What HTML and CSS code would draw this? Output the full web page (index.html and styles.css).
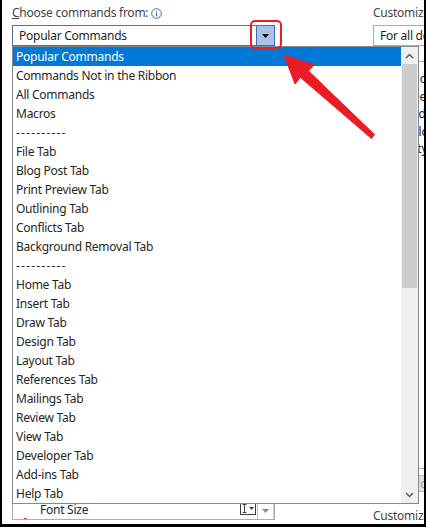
FILE: index.html
```html
<!DOCTYPE html>
<html lang="en">

<head>
  <meta charset="UTF-8">
  <meta name="viewport" content="width=device-width, initial-scale=1.0">
  <title>Word Options | Customize Ribbon</title>
  <link rel="stylesheet" href="styles.css">
</head>

<body>
  <main class="dialog">
    <section class="pane pane-left">
      <label class="caption"><u>C</u>hoose commands from:<svg class="info" width="11" height="11" viewBox="0 0 11 11"><circle cx="5.5" cy="5.5" r="4.8" fill="none" stroke="#3d6db0" stroke-width="1"/><rect x="5" y="2.6" width="1" height="1" fill="#3d6db0"/><rect x="5" y="4.4" width="1" height="4" fill="#3d6db0"/></svg></label>
      <div class="combo combo-focus">
        <span class="combo-text">Popular Commands</span>
        <span class="combo-btn"><svg width="7" height="4" viewBox="0 0 7 4"><path d="M0 0h7L3.5 4z" fill="#000"/></svg></span>
      </div>
      <ul class="cmd-list">
        <li class="cmd-font-size">
          <span class="cmd-icon"></span>
          <span class="cmd-name">Font Size</span>
          <svg class="ibeam" width="16" height="13" viewBox="0 0 16 13"><rect x="0.5" y="0.5" width="15" height="12" fill="#fff" stroke="#404040"/><path d="M2.5 2.5h4M4.5 2.5v8M2.5 10.5h4" stroke="#404040" fill="none"/><path d="M9 5h5L11.5 8z" fill="#404040"/></svg>
          <span class="cmd-drop"><svg width="7" height="4" viewBox="0 0 7 4"><path d="M0 0h7L3.5 4z" fill="#8a8a8a"/></svg></span>
        </li>
      </ul>
    </section>

    <section class="pane pane-right">
      <label class="caption">Customize the Ribbon:</label>
      <div class="combo">
        <span class="combo-text">For all documents (Default)</span>
      </div>
      <ul class="tab-tree">
        <li>Home</li>
        <li>Developer</li>
        <li>Add-ins</li>
        <li>Blog Post</li>
        <li>Styles</li>
      </ul>
      <button class="btn" disabled>Modify</button>
      <label class="caption">Customizations:</label>
    </section>

    <!-- open list of the "Choose commands from" combo -->
    <div class="dropdown">
      <ul class="dropdown-items">
        <li class="selected">Popular Commands</li>
        <li>Commands Not in the Ribbon</li>
        <li>All Commands</li>
        <li>Macros</li>
        <li class="sep">----------</li>
        <li>File Tab</li>
        <li>Blog Post Tab</li>
        <li>Print Preview Tab</li>
        <li>Outlining Tab</li>
        <li>Conflicts Tab</li>
        <li>Background Removal Tab</li>
        <li class="sep">----------</li>
        <li>Home Tab</li>
        <li>Insert Tab</li>
        <li>Draw Tab</li>
        <li>Design Tab</li>
        <li>Layout Tab</li>
        <li>References Tab</li>
        <li>Mailings Tab</li>
        <li>Review Tab</li>
        <li>View Tab</li>
        <li>Developer Tab</li>
        <li>Add-ins Tab</li>
        <li>Help Tab</li>
      </ul>
      <div class="scrollbar">
        <span class="scroll-arrow"><svg width="9" height="6" viewBox="0 0 9 6"><path d="M1 5l3.5-3.5L8 5" fill="none" stroke="#606060" stroke-width="1.5"/></svg></span>
        <span class="scroll-track"><span class="scroll-thumb"></span></span>
        <span class="scroll-arrow"><svg width="9" height="6" viewBox="0 0 9 6"><path d="M1 1l3.5 3.5L8 1" fill="none" stroke="#606060" stroke-width="1.5"/></svg></span>
      </div>
    </div>
  </main>

  <!-- red callout: box round the drop button and the arrow pointing at it -->
  <svg class="callout" width="426" height="527" viewBox="0 0 426 527">
    <rect x="251" y="21" width="30" height="27" rx="4" fill="none" stroke="#ec1c24" stroke-width="2"/>
    <polygon points="284,55 314,65 308.5,71 374.5,134.5 371.5,138.5 300.5,77.5 295,84" fill="#ec1c24" stroke="#ec1c24" stroke-width="1" stroke-linejoin="round"/>
  </svg>
</body>

</html>
```

FILE: styles.css
```css
/* ---- General ---- */

:root {
  --text: #262626;
  --caption: #444;
  --select: #0078d7;
  --edge: #adadad;
}

* {
  box-sizing: border-box;
}

body {
  position: relative;
  width: 426px;
  height: 527px;
  margin: 0;
  overflow: hidden;
  background: #fff;
  font-family: "Noto Sans", "Open Sans", sans-serif;
  font-size: 12px;
  letter-spacing: -0.25px;
  color: var(--text);
}

ul {
  margin: 0;
  padding: 0;
  list-style: none;
}

.dialog {
  position: relative;
  display: flex;
  height: 527px;
  padding: 5px 0 0 10px;
  border-left: 2px solid #000;
  border-right: 2px solid #000;
  border-bottom: 3px solid #000;
  overflow: hidden;
}

.pane {
  display: flex;
  flex-direction: column;
  flex-shrink: 0;
}

.pane-left {
  width: 263px;
  margin-right: 98px;
}

.pane-right {
  width: 240px;
}

.caption {
  display: flex;
  align-items: center;
  height: 16px;
  line-height: 16px;
  color: var(--caption);
  white-space: nowrap;
}

.info {
  margin-left: 3px;
}

/* ---- Combo boxes ---- */

.combo {
  display: flex;
  height: 21px;
  margin-top: 4px;
  border: 1px solid var(--edge);
  background: #fff;
}

.combo-text {
  flex: 1;
  padding-left: 6px;
  line-height: 19px;
  color: #1e1e1e;
  white-space: nowrap;
}

.combo-focus {
  border-color: #56709e;
}

.combo-btn {
  display: flex;
  align-items: center;
  justify-content: center;
  width: 19px;
  margin: -1px -1px -1px 0;
  border: 1px solid #3f6fb4;
  background: #a9c2e6;
}

/* ---- Command list under the popup ---- */

.cmd-list {
  display: flex;
  flex: 1;
  flex-direction: column;
  justify-content: flex-end;
  margin: 6px 0 4px;
  padding-bottom: 1px;
  border: 1px solid var(--edge);
  overflow: hidden;
}

.cmd-list li {
  flex-shrink: 0;
  height: 16px;
  padding-left: 27px;
  line-height: 16px;
  white-space: nowrap;
}

.cmd-font-size {
  position: relative;
  display: flex;
  align-items: center;
}

.cmd-icon {
  position: absolute;
  left: 11px;
  bottom: -2px;
  width: 3px;
  height: 2px;
  background: #d83b2b;
}

.cmd-name {
  flex: 1;
}

.ibeam {
  margin-top: -3px;
}

.cmd-drop {
  display: flex;
  align-items: center;
  justify-content: center;
  width: 17px;
  height: 17px;
  margin: 0 0 -2px 1px;
  border: 1px solid #c4c4c4;
}

/* ---- Right pane ---- */

.tab-tree {
  flex: 1;
  margin-top: 15px;
  padding: 8px 0 0 37px;
  border: 1px solid var(--edge);
}

.tab-tree li {
  height: 17.5px;
  line-height: 17.5px;
  white-space: nowrap;
}

.btn {
  height: 17px;
  margin: 6px 0 16px;
  padding: 0 0 0 35px;
  width: 120px;
  border: 1px solid #bfbfbf;
  background: #e1e1e1;
  font: inherit;
  line-height: 15px;
  color: #a0a0a0;
  text-align: left;
}

/* ---- Popup list ---- */

.dropdown {
  position: absolute;
  top: 46px;
  left: 10px;
  display: flex;
  width: 407px;
  height: 458px;
  border: 1px solid #828790;
  background: #fff;
}

.dropdown-items {
  flex: 1;
}

.dropdown-items li {
  height: 19px;
  padding-left: 3px;
  line-height: 19px;
  white-space: nowrap;
}

.dropdown-items .sep {
  letter-spacing: 1.2px;
}

.dropdown-items .selected {
  background: var(--select);
  color: #fff;
}

.scrollbar {
  display: flex;
  flex-direction: column;
  width: 17px;
  background: #f0f0f0;
}

.scroll-arrow {
  display: flex;
  align-items: center;
  justify-content: center;
  height: 17px;
}

.scroll-track {
  flex: 1;
  padding: 0 1px;
}

.scroll-thumb {
  display: block;
  height: 224px;
  background: #cdcdcd;
}

/* ---- Callout ---- */

.callout {
  position: absolute;
  top: 0;
  left: 0;
  pointer-events: none;
}
```
